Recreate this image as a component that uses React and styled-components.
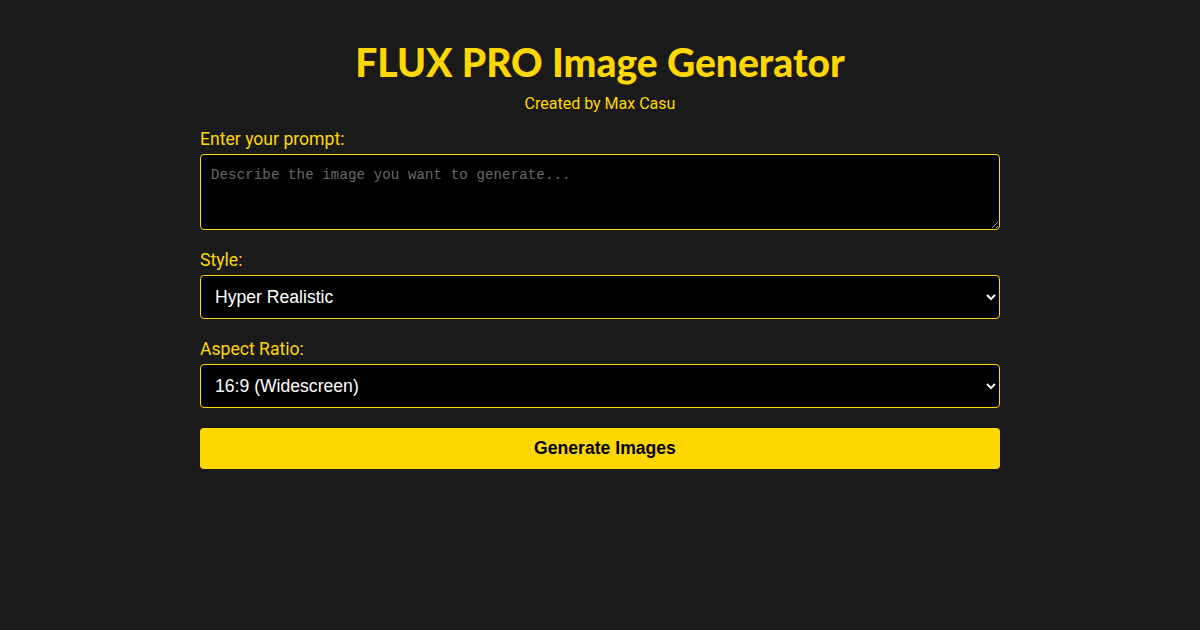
import React from 'react';
import styled, {createGlobalStyle} from 'styled-components';

const GlobalStyle = createGlobalStyle`
    html, body {
        margin: 0;
        padding: 0;
        background-color: #1a1a1a;
    }
    body {
        font-family: Roboto, 'Liberation Sans', sans-serif;
        color: #ffd700;
    }
`;

const Page = styled.div`
    min-height: 630px;
    box-sizing: border-box;
    padding: 39px 20px;
`;

const Container = styled.div`
    max-width: 800px;
    margin: 0 auto;
`;

const Title = styled.h1`
    font-family: 'Lato', 'Liberation Sans', sans-serif;
    font-weight: 900;
    font-size: 39px;
    line-height: 46px;
    text-align: center;
    color: #ffd700;
    margin: 0 0 9px 0;
`;

const Subtitle = styled.p`
    font-family: Roboto, sans-serif;
    font-size: 16px;
    line-height: 20px;
    text-align: center;
    margin: 0 0 16px 0;
`;

const FormGroup = styled.div`
    margin-bottom: 21px;
`;

const Label = styled.label`
    display: block;
    font-family: Roboto, sans-serif;
    font-size: 17.6px;
    line-height: 19px;
    margin-bottom: 5px;
`;

const Textarea = styled.textarea`
    display: block;
    width: 100%;
    height: 76px;
    box-sizing: border-box;
    padding: 12px 10px 10px 10px;
    background-color: #000;
    color: #fff;
    border: 1px solid #ffd700;
    border-radius: 4px;
    font-family: 'Liberation Mono', monospace;
    font-size: 14px;
    letter-spacing: 0.16px;

    &::placeholder {
        color: #6a6a6a;
    }
`;

const Select = styled.select`
    display: block;
    width: 100%;
    height: 44px;
    box-sizing: border-box;
    padding: 0 10px;
    background-color: #000;
    color: #fff;
    border: 1px solid #ffd700;
    border-radius: 4px;
    font-family: 'Liberation Sans', Arial, sans-serif;
    font-size: 17.6px;
`;

const Button = styled.button`
    display: block;
    width: 100%;
    height: 41px;
    margin-top: -1px;
    padding: 0 0 0 10px;
    background-color: #ffd700;
    color: #000;
    border: none;
    border-radius: 4px;
    font-family: 'Liberation Sans', Arial, sans-serif;
    font-weight: 700;
    font-size: 17.6px;
    cursor: pointer;
`;

export default function App() {
    return (
        <Page>
            <GlobalStyle/>
            <Container>
                <Title>{'FLUX PRO Image Generator'}</Title>
                <Subtitle>{'Created by Max Casu'}</Subtitle>
                <FormGroup>
                    <Label htmlFor='prompt'>{'Enter your prompt:'}</Label>
                    <Textarea
                        id='prompt'
                        placeholder='Describe the image you want to generate...'
                    />
                </FormGroup>
                <FormGroup>
                    <Label htmlFor='style'>{'Style:'}</Label>
                    <Select
                        id='style'
                        defaultValue='hyper'
                    >
                        <option value='hyper'>{'Hyper Realistic'}</option>
                        <option value='anime'>{'Anime'}</option>
                        <option value='art'>{'Digital Art'}</option>
                    </Select>
                </FormGroup>
                <FormGroup>
                    <Label htmlFor='ratio'>{'Aspect Ratio:'}</Label>
                    <Select
                        id='ratio'
                        defaultValue='16:9'
                    >
                        <option value='1:1'>{'1:1 (Square)'}</option>
                        <option value='16:9'>{'16:9 (Widescreen)'}</option>
                        <option value='9:16'>{'9:16 (Portrait)'}</option>
                    </Select>
                </FormGroup>
                <Button>{'Generate Images'}</Button>
            </Container>
        </Page>
    );
}
